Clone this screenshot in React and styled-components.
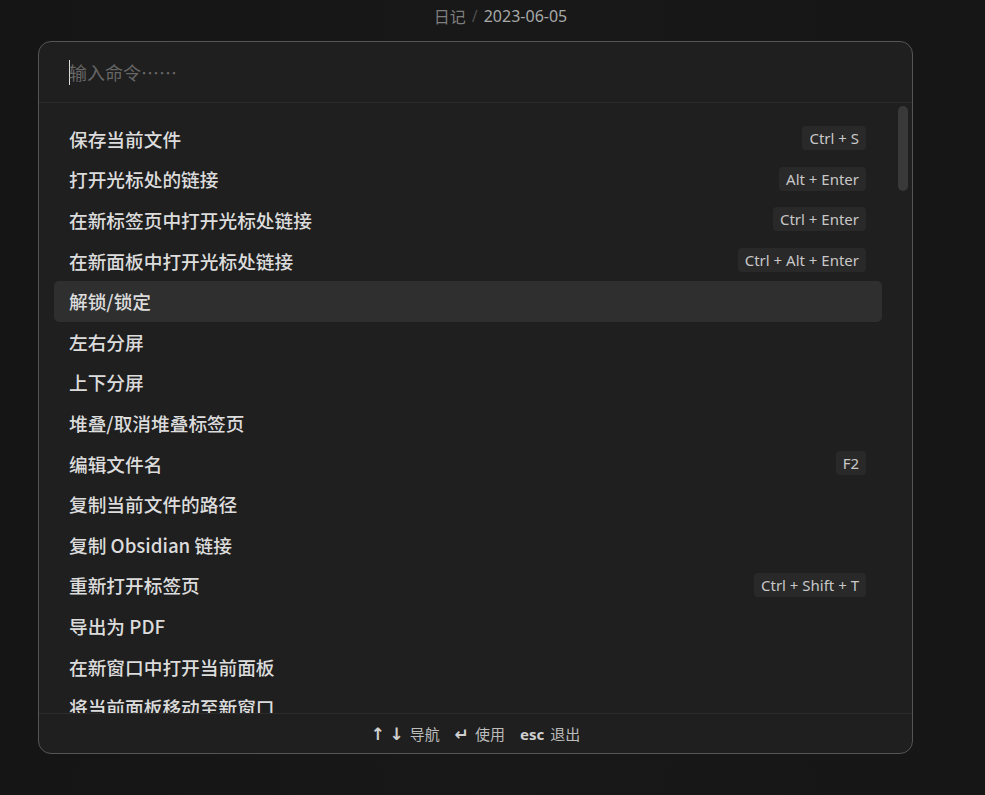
import React from "react";
import styled, { createGlobalStyle } from "styled-components";

const GlobalStyle = createGlobalStyle`
  html, body {
    margin: 0;
    padding: 0;
    background: #171717;
  }
  body {
    font-family: "Noto Sans", "Noto Sans CJK SC", sans-serif;
  }
`;

const Page = styled.div`
  width: 985px;
  height: 795px;
  overflow: hidden;
  background: linear-gradient(90deg, #151515 0%, #181818 50%, #161616 100%);
  display: flex;
  flex-direction: column;
`;

const Breadcrumb = styled.div`
  height: 31px;
  display: flex;
  align-items: center;
  justify-content: center;
  gap: 6px;
  font-size: 16px;
  margin-left: 16px;
`;

const Crumb = styled.span`
  color: ${(p) => (p.$active ? "#a8a8a8" : "#7e7e7e")};
`;

const Slash = styled.span`
  color: #4d4d4d;
`;

const Modal = styled.div`
  margin: 10px 0 0 38px;
  width: 873px;
  height: 711px;
  background: #1f1f1f;
  border: 1px solid #555;
  border-radius: 13px;
  display: flex;
  flex-direction: column;
  overflow: hidden;
`;

const InputRow = styled.div`
  height: 60px;
  flex-shrink: 0;
  display: flex;
  align-items: center;
  padding-left: 30px;
  border-bottom: 1px solid #2a2a2a;
`;

const Caret = styled.span`
  width: 1px;
  height: 25px;
  background: #ddd;
  margin-right: -1px;
`;

const Placeholder = styled.span`
  font-size: 18px;
  color: #666;
  font-family: "Noto Sans CJK SC", "Noto Sans", sans-serif;
`;

const Body = styled.div`
  flex: 1;
  display: flex;
  overflow: hidden;
  border-bottom: 1px solid #2c2c2c;
`;

const List = styled.div`
  flex: 1;
  padding: 16px 13px 0 15px;
  overflow: hidden;
`;

const Row = styled.div`
  height: 40.6px;
  box-sizing: border-box;
  padding: 0 16px 0 15px;
  border-radius: 5px;
  display: flex;
  align-items: center;
  justify-content: space-between;
  background: ${(p) => (p.$selected ? "#2f2f2f" : "transparent")};
`;

const Label = styled.span`
  font-family: "Noto Sans CJK SC", "Noto Sans", sans-serif;
  font-size: 18.7px;
  font-weight: 500;
  color: #dcdcdc;
  margin-top: -2px;
`;

const Kbd = styled.span`
  font-size: 15px;
  color: #c8c8c8;
  background: #292929;
  border-radius: 4px;
  padding: 0 7px;
  height: 24px;
  line-height: 24px;
  margin-top: -2px;
`;

const Track = styled.div`
  width: 17px;
  flex-shrink: 0;
  padding-top: 3px;
  display: flex;
  justify-content: center;
`;

const Thumb = styled.div`
  width: 10px;
  height: 85px;
  border-radius: 5px;
  background: #393939;
  margin-right: 2px;
`;

const Footer = styled.div`
  height: 39px;
  flex-shrink: 0;
  display: flex;
  align-items: center;
  justify-content: center;
  gap: 15px;
  font-size: 15px;
  color: #bcbcbc;
`;

const Hint = styled.span`
  display: flex;
  align-items: center;
  gap: 6px;
  font-family: "Noto Sans CJK SC", "Noto Sans", sans-serif;
`;

const HintKey = styled.span`
  font-family: "Noto Sans", "DejaVu Sans", sans-serif;
  font-size: ${(p) => (p.$bold ? "15px" : "17px")};
  font-weight: 700;
  color: #d0d0d0;
`;

const commands = [
  { label: "保存当前文件", key: "Ctrl + S" },
  { label: "打开光标处的链接", key: "Alt + Enter" },
  { label: "在新标签页中打开光标处链接", key: "Ctrl + Enter" },
  { label: "在新面板中打开光标处链接", key: "Ctrl + Alt + Enter" },
  { label: "解锁/锁定", selected: true },
  { label: "左右分屏" },
  { label: "上下分屏" },
  { label: "堆叠/取消堆叠标签页" },
  { label: "编辑文件名", key: "F2" },
  { label: "复制当前文件的路径" },
  { label: "复制 Obsidian 链接" },
  { label: "重新打开标签页", key: "Ctrl + Shift + T" },
  { label: "导出为 PDF" },
  { label: "在新窗口中打开当前面板" },
  { label: "将当前面板移动至新窗口" },
];

export default function App() {
  return (
    <Page>
      <GlobalStyle />
      <Breadcrumb>
        <Crumb>日记</Crumb>
        <Slash>/</Slash>
        <Crumb $active>2023-06-05</Crumb>
      </Breadcrumb>
      <Modal>
        <InputRow>
          <Caret />
          <Placeholder>输入命令……</Placeholder>
        </InputRow>
        <Body>
          <List>
            {commands.map((c) => (
              <Row key={c.label} $selected={c.selected}>
                <Label>{c.label}</Label>
                {c.key && <Kbd>{c.key}</Kbd>}
              </Row>
            ))}
          </List>
          <Track>
            <Thumb />
          </Track>
        </Body>
        <Footer>
          <Hint>
            <HintKey>↑ ↓</HintKey> 导航
          </Hint>
          <Hint>
            <HintKey>↵</HintKey> 使用
          </Hint>
          <Hint>
            <HintKey $bold>esc</HintKey> 退出
          </Hint>
        </Footer>
      </Modal>
    </Page>
  );
}
